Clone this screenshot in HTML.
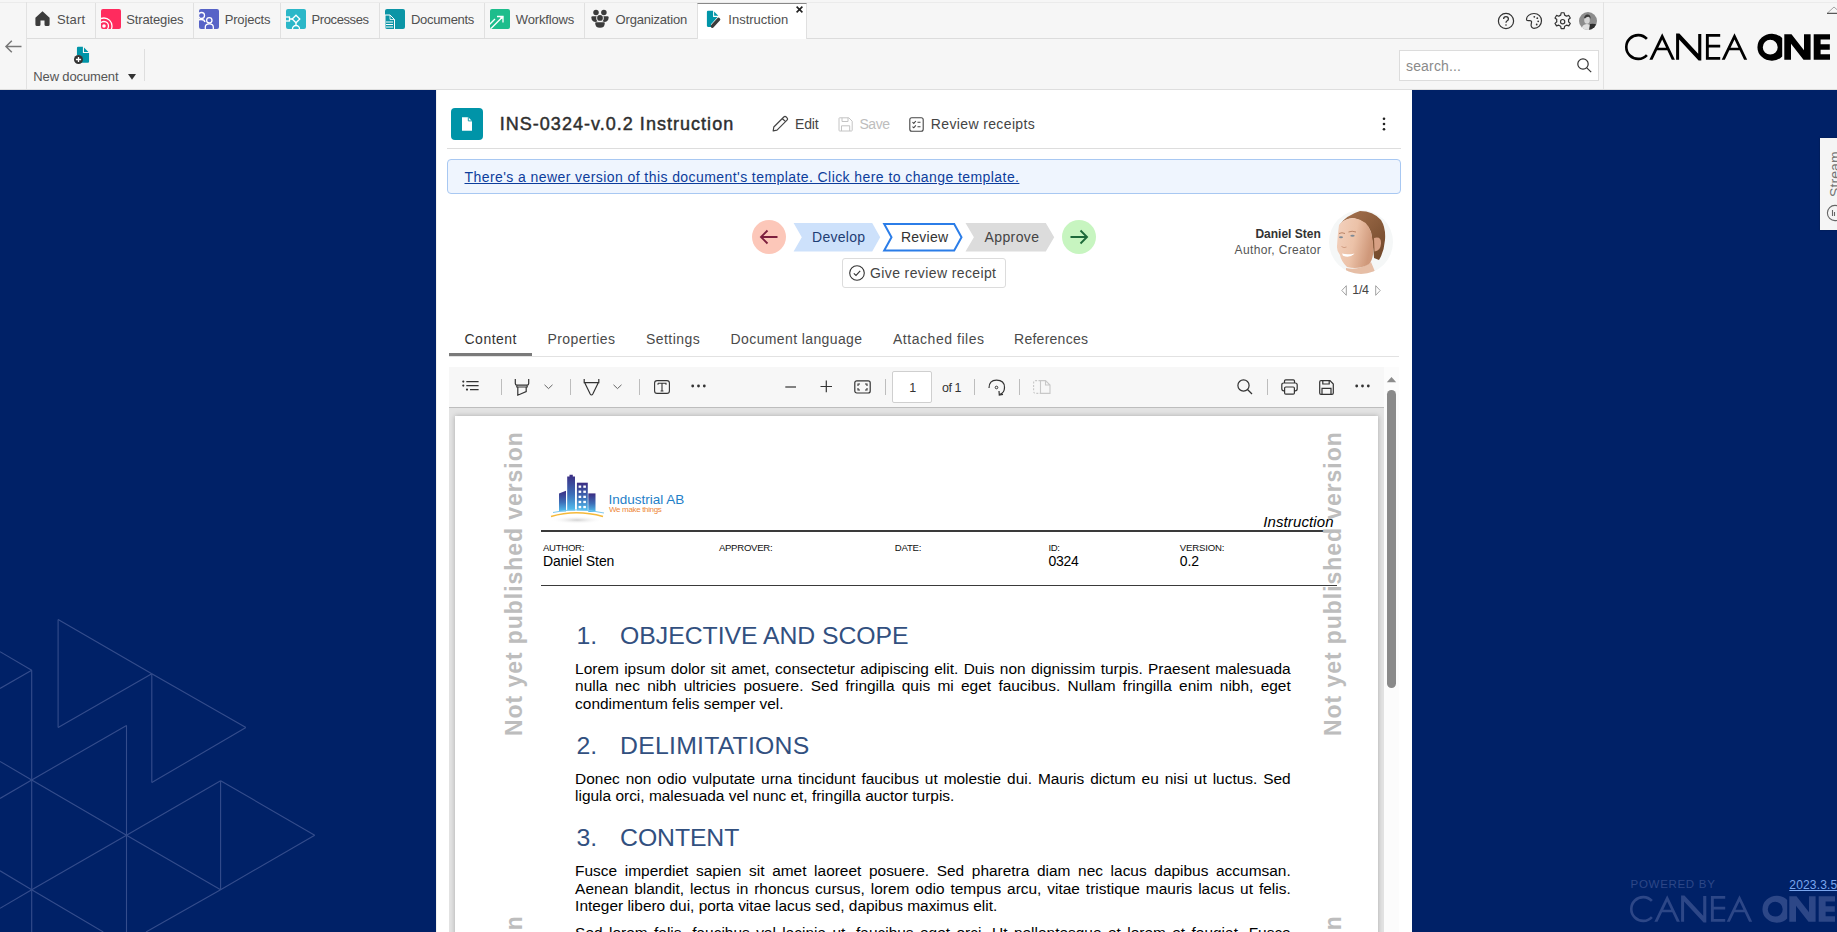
<!DOCTYPE html><html><head><meta charset="utf-8"><style>
*{box-sizing:border-box;margin:0;padding:0}
html,body{width:1837px;height:932px;overflow:hidden}
body{position:relative;background:#002167;font-family:"Liberation Sans",sans-serif;}
.a{position:absolute}
.t{position:absolute;white-space:nowrap;line-height:1}
svg{position:absolute;overflow:visible}
</style></head><body>
<svg class="a" style="left:0;top:0" width="1837" height="932"><line stroke="#344d8c" stroke-width="1.1"  x1="58.1" y1="619.6" x2="58.1" y2="727.6"/><line stroke="#344d8c" stroke-width="1.1"  x1="58.1" y1="619.6" x2="151.8" y2="673.8"/><line stroke="#344d8c" stroke-width="1.1"  x1="58.1" y1="727.6" x2="151.8" y2="673.8"/><line stroke="#344d8c" stroke-width="1.1"  x1="151.8" y1="673.8" x2="151.8" y2="782.5"/><line stroke="#344d8c" stroke-width="1.1"  x1="151.8" y1="673.8" x2="245.9" y2="727.6"/><line stroke="#344d8c" stroke-width="1.1"  x1="151.8" y1="782.5" x2="245.9" y2="727.6"/><line stroke="#344d8c" stroke-width="1.1"  x1="0" y1="651.7" x2="31.7" y2="670.2"/><line stroke="#344d8c" stroke-width="1.1"  x1="31.7" y1="670.2" x2="0" y2="688.4"/><line stroke="#344d8c" stroke-width="1.1"  x1="31.7" y1="670.2" x2="31.7" y2="940"/><line stroke="#344d8c" stroke-width="1.1"  x1="31.7" y1="780" x2="126.5" y2="725.4"/><line stroke="#344d8c" stroke-width="1.1"  x1="126.5" y1="725.4" x2="126.5" y2="940"/><line stroke="#344d8c" stroke-width="1.1"  x1="31.7" y1="780" x2="126.5" y2="835.2"/><line stroke="#344d8c" stroke-width="1.1"  x1="0" y1="761.4" x2="31.7" y2="780"/><line stroke="#344d8c" stroke-width="1.1"  x1="31.7" y1="780" x2="0" y2="798.5"/><line stroke="#344d8c" stroke-width="1.1"  x1="126.5" y1="835.2" x2="220.6" y2="780.7"/><line stroke="#344d8c" stroke-width="1.1"  x1="220.6" y1="780.7" x2="220.6" y2="889.7"/><line stroke="#344d8c" stroke-width="1.1"  x1="126.5" y1="835.2" x2="220.6" y2="889.7"/><line stroke="#344d8c" stroke-width="1.1"  x1="220.6" y1="780.7" x2="314.7" y2="835.2"/><line stroke="#344d8c" stroke-width="1.1"  x1="220.6" y1="889.7" x2="314.7" y2="835.2"/><line stroke="#344d8c" stroke-width="1.1"  x1="126.5" y1="835.2" x2="31.7" y2="889.7"/><line stroke="#344d8c" stroke-width="1.1"  x1="31.7" y1="889.7" x2="103.3" y2="932"/><line stroke="#344d8c" stroke-width="1.1"  x1="0" y1="870.8" x2="31.7" y2="889.7"/><line stroke="#344d8c" stroke-width="1.1"  x1="31.7" y1="889.7" x2="0" y2="908.3"/><line stroke="#344d8c" stroke-width="1.1"  x1="220.6" y1="889.7" x2="146" y2="932"/></svg>
<div class="a" style="left:0;top:0;width:1837px;height:90px;background:#f6f6f6;border-bottom:1px solid #dedede"></div>
<div class="a" style="left:0;top:2px;width:1837px;height:1px;background:#ebebeb"></div>
<div class="a" style="left:26px;top:2px;width:1px;height:87px;background:#e2e2e2"></div>
<div class="a" style="left:1603px;top:2px;width:1px;height:87px;background:#e2e2e2"></div>
<div class="a" style="left:27px;top:38px;width:1576px;height:1px;background:#dcdcdc"></div>
<div class="a" style="left:95px;top:3px;width:1px;height:35px;background:#e0e0e0"></div>
<div class="a" style="left:193px;top:3px;width:1px;height:35px;background:#e0e0e0"></div>
<div class="a" style="left:280px;top:3px;width:1px;height:35px;background:#e0e0e0"></div>
<div class="a" style="left:379px;top:3px;width:1px;height:35px;background:#e0e0e0"></div>
<div class="a" style="left:484px;top:3px;width:1px;height:35px;background:#e0e0e0"></div>
<div class="a" style="left:584px;top:3px;width:1px;height:35px;background:#e0e0e0"></div>
<div class="a" style="left:697px;top:3px;width:110px;height:36px;background:#fff;border-left:1px solid #e0e0e0;border-right:1px solid #e0e0e0;border-top:1px solid #888"></div>
<div class="t " style="left:57.00px;top:13.20px;font-size:13px;color:#505050;letter-spacing:0.137px;">Start</div>
<div class="t " style="left:126.30px;top:13.20px;font-size:13px;color:#505050;letter-spacing:-0.148px;">Strategies</div>
<div class="t " style="left:224.70px;top:13.20px;font-size:13px;color:#505050;letter-spacing:-0.166px;">Projects</div>
<div class="t " style="left:311.50px;top:13.20px;font-size:13px;color:#505050;letter-spacing:-0.399px;">Processes</div>
<div class="t " style="left:411.00px;top:13.20px;font-size:13px;color:#505050;letter-spacing:-0.306px;">Documents</div>
<div class="t " style="left:515.80px;top:13.20px;font-size:13px;color:#505050;letter-spacing:-0.152px;">Workflows</div>
<div class="t " style="left:615.60px;top:13.20px;font-size:13px;color:#505050;letter-spacing:-0.192px;">Organization</div>
<div class="t " style="left:728.30px;top:13.20px;font-size:13px;color:#505050;letter-spacing:0.003px;">Instruction</div>
<svg style="left:35px;top:11px" width="15" height="15" viewBox="0 0 15 15"><path d="M7.5 0.3 L14.6 6.8 V13.5 Q14.6 15 13.1 15 H11 Q9.5 15 9.5 13.5 V9.5 H5.5 V13.5 Q5.5 15 4 15 H1.9 Q0.4 15 0.4 13.5 V6.8 Z" fill="#3c3c3c"/></svg>
<svg style="left:101px;top:9px" width="20" height="20" viewBox="0 0 20 20"><defs><clipPath id="cs"><rect width="20" height="20" rx="2"/></clipPath></defs><rect width="20" height="20" rx="2" fill="#ff2b5e"/><g clip-path="url(#cs)" fill="none" stroke="#fff" stroke-width="1.3"><circle cx="3" cy="17" r="1.8" fill="#fff" stroke="none"/><circle cx="3" cy="17" r="4.5"/><circle cx="3" cy="17" r="8"/></g></svg>
<svg style="left:199px;top:9px" width="20" height="20" viewBox="0 0 20 20"><defs><clipPath id="cp"><rect width="20" height="20" rx="2"/></clipPath></defs><rect width="20" height="20" rx="2" fill="#5763c7"/><g clip-path="url(#cp)" fill="none" stroke="#fff" stroke-width="1.3"><circle cx="2.5" cy="6.5" r="3"/><path d="M-2 21 V14 Q-2 10.5 2 10.5 Q5.5 10.5 6 13"/><circle cx="10.3" cy="11.3" r="2.7"/><path d="M6.3 21 V18 Q6.3 14.8 10.3 14.8 Q14.3 14.8 14.3 18 V21"/></g></svg>
<svg style="left:286px;top:9px" width="20" height="20" viewBox="0 0 20 20"><defs><clipPath id="cq"><rect width="20" height="20" rx="2"/></clipPath></defs><rect width="20" height="20" rx="2" fill="#2bb7c8"/><g clip-path="url(#cq)" fill="none" stroke="#fff" stroke-width="1.3"><rect x="-1" y="8" width="4.5" height="4"/><path d="M3.5 10 H6"/><path d="M10 6.2 L13.8 10 L10 13.8 L6.2 10 Z"/><path d="M10 14 V16"/><circle cx="10" cy="20" r="3.5"/></g></svg>
<svg style="left:385px;top:9px" width="20" height="20" viewBox="0 0 20 20"><defs><clipPath id="cd"><rect width="20" height="20" rx="2"/></clipPath></defs><rect width="20" height="20" rx="2" fill="#0b95a6"/><g clip-path="url(#cd)"><path d="M0 6 H5 L9.5 10.5 V21 H0 Z" fill="none" stroke="#fff" stroke-width="1"/><path d="M5 6 V10.5 H9.5" fill="none" stroke="#fff" stroke-width="0.8"/><path d="M1 13 H8 M1 15.5 H8 M1 18 H8" stroke="#fff" stroke-width="1"/></g></svg>
<svg style="left:490px;top:9px" width="20" height="20" viewBox="0 0 20 20"><defs><clipPath id="cw"><rect width="20" height="20" rx="2"/></clipPath></defs><rect width="20" height="20" rx="2" fill="#1dbd8c"/><g clip-path="url(#cw)" fill="none" stroke="#fff" stroke-width="1.3"><path d="M7 7.5 H13 V13.5"/><path d="M13 7.5 L0 20.5"/><path d="M11 7.5 V9 H12.8" /><path d="M-1 16 L5 10"/></g></svg>
<svg style="left:588px;top:6px" width="24" height="26" viewBox="588 6 24 26" fill="#3b3b3b"><circle cx="596" cy="12.4" r="2.75"/><circle cx="603.9" cy="12.4" r="2.75"/><circle cx="600" cy="17.9" r="2.85"/><path d="M591.3 17.6 Q591.3 16.3 592.6 16.3 L596.6 16.3 Q596 17.2 596.3 19.2 Q596.8 20.6 597.6 21.3 Q595.2 22.6 593.5 21.6 Q591.3 20.5 591.3 17.6 Z"/><path d="M608.7 17.6 Q608.7 16.3 607.4 16.3 L603.4 16.3 Q604 17.2 603.7 19.2 Q603.2 20.6 602.4 21.3 Q604.8 22.6 606.5 21.6 Q608.7 20.5 608.7 17.6 Z"/><path d="M595.2 22.9 Q595.2 22.2 596 22.2 H604 Q604.8 22.2 604.8 22.9 Q604.8 27.8 600 27.8 Q595.2 27.8 595.2 22.9 Z"/></svg>
<svg style="left:703px;top:8px" width="24" height="22" viewBox="703 8 24 22"><path d="M706.9 11.9 Q706.9 10.8 708 10.8 H713.1 V17 H717.6 L711 24.3 V26.9 H708 Q706.9 26.9 706.9 25.8 Z" fill="#0095a8"/><path d="M714.1 11.5 V15.8 H718.3 Z" fill="#0095a8"/><path d="M712.4 26.2 L718.6 19.4" stroke="#3b3b3b" stroke-width="3.4" stroke-linecap="round"/></svg>
<svg style="left:796px;top:6px" width="7" height="7" viewBox="0 0 7 7"><path d="M0.6 0.6 L6.4 6.4 M6.4 0.6 L0.6 6.4" stroke="#222" stroke-width="1.6"/></svg>
<svg style="left:5px;top:40px" width="17" height="13" viewBox="0 0 17 13"><path d="M16.5 6.5 H1.2 M6.8 0.8 L1 6.5 L6.8 12.2" fill="none" stroke="#777" stroke-width="1.5"/></svg>
<svg style="left:70px;top:43px" width="24" height="24" viewBox="70 43 24 24"><path d="M76.95 48 Q76.95 46.86 78.1 46.86 H82.9 V53 H89.06 V61.7 Q89.06 62.8 87.9 62.8 H80 Q83.5 59.5 81 56 Q79 54.5 76.95 55 Z" fill="#0095a8"/><path d="M84 47.6 V51.9 H88.4 Z" fill="#0095a8"/><circle cx="78.5" cy="59.5" r="4.5" fill="#333"/><path d="M78.5 56.9 V62.1 M75.9 59.5 H81.1" stroke="#fff" stroke-width="1.3"/></svg>
<div class="t " style="left:33.30px;top:69.80px;font-size:13px;color:#555;letter-spacing:-0.137px;">New document</div>
<svg style="left:127.5px;top:74px" width="8" height="6" viewBox="0 0 8 6"><path d="M0 0 H8 L4 5.8 Z" fill="#333"/></svg>
<div class="a" style="left:144px;top:49px;width:1px;height:32px;background:#dedede"></div>
<svg style="left:1497px;top:12px" width="18" height="18" viewBox="0 0 18 18"><circle cx="9" cy="9" r="7.6" fill="none" stroke="#333" stroke-width="1.2"/><path d="M6.6 7 Q6.6 4.6 9 4.6 Q11.4 4.6 11.4 6.9 Q11.4 8.3 9.9 9 Q9 9.5 9 10.8" fill="none" stroke="#333" stroke-width="1.3"/><circle cx="9" cy="13" r="0.8" fill="#333"/></svg>
<svg style="left:1525px;top:12px" width="18" height="18" viewBox="0 0 18 18"><path d="M9 1.5 C4.5 1.5 1.5 4.5 1.5 7.2 C1.5 9.2 3.3 8.6 5 8.6 C7.2 8.6 6.6 10.5 6.2 12 C5.6 14.5 7.2 16.3 9 16.3 C13.3 16.3 16.5 12.8 16.5 8.8 C16.5 4.8 13.6 1.5 9 1.5 Z" fill="none" stroke="#333" stroke-width="1.2"/><circle cx="9.3" cy="4.8" r="0.9" fill="#333"/><circle cx="12.3" cy="6.2" r="0.9" fill="#333"/><circle cx="13.2" cy="9.3" r="0.9" fill="#333"/><circle cx="11.7" cy="12.5" r="0.9" fill="#333"/></svg>
<svg style="left:1551.5px;top:11px" width="21.3" height="21.3" viewBox="0 0 24 24"><path d="M10.3 2 h3.4 l0.5 2.6 a7.6 7.6 0 0 1 2.2 1.3 l2.5-0.9 1.7 2.9-2 1.7 a7.6 7.6 0 0 1 0 2.6 l2 1.7-1.7 2.9-2.5-0.9 a7.6 7.6 0 0 1-2.2 1.3 l-0.5 2.6 h-3.4 l-0.5-2.6 a7.6 7.6 0 0 1-2.2-1.3 l-2.5 0.9-1.7-2.9 2-1.7 a7.6 7.6 0 0 1 0-2.6 l-2-1.7 1.7-2.9 2.5 0.9 a7.6 7.6 0 0 1 2.2-1.3 Z" fill="none" stroke="#333" stroke-width="1.35" stroke-linejoin="round"/><circle cx="12" cy="12" r="2.4" fill="none" stroke="#333" stroke-width="1.35"/></svg>
<svg style="left:1579px;top:12px" width="18" height="18" viewBox="0 0 18 18"><defs><clipPath id="av1"><circle cx="9" cy="9" r="9"/></clipPath></defs><g clip-path="url(#av1)"><rect width="18" height="18" fill="#8d8d8d"/><path d="M2 18 Q3 12 8 12 Q12 12 13 18 Z" fill="#e0e0e0"/><ellipse cx="8" cy="8" rx="2.8" ry="3.8" fill="#d5d5d5"/><path d="M5 6 Q6 2 9 2.5 Q12 3 11.5 7 L10.5 5 Q8 4 6 6.5 Z" fill="#3a3a3a"/><path d="M11 12 L10 18 H18 V13 Q15 11 11 12 Z" fill="#2e2e2e"/></g></svg>
<div class="a" style="left:1399px;top:50px;width:200px;height:31px;background:#fff;border:1px solid #dcdcdc"></div>
<div class="t " style="left:1406.00px;top:59.05px;font-size:14px;color:#8a8a8a;letter-spacing:0.164px;">search...</div>
<svg style="left:1577px;top:58px" width="15" height="15" viewBox="0 0 15 15"><circle cx="6" cy="6" r="5.2" fill="none" stroke="#333" stroke-width="1.2"/><path d="M9.8 9.8 L14.2 14.2" stroke="#333" stroke-width="1.2"/></svg>
<svg style="left:1820px;top:0px" width="17" height="16" viewBox="1820 0 17 16"><path d="M1827.3 13.2 L1834 7 L1841 13.2" fill="none" stroke="#9a9a9a" stroke-width="0.9"/><path d="M1827 13.3 H1837" stroke="#333" stroke-width="1"/></svg>
<svg style="left:0;top:0;color:#000" width="1837" height="90" viewBox="0 0 1837 90" fill="currentColor"><path d="M1646.9 38.9 A11.9 11.9 0 1 0 1646.9 55.1" fill="none" stroke="currentColor" stroke-width="2.6"/><path d="M1649.4 59.85 L1662.2 33.2 L1674.9 59.85 H1671.8 L1662.2 39.6 L1652.5 59.85 Z M1655.4 47.8 H1669 V50.3 H1655.4 Z"/><path d="M1676.1 33.4 H1679.4 L1698.2 53.8 V33.9 H1701.3 V60.6 H1698.6 L1679.1 39.6 V59.85 H1676.1 Z"/><path d="M1705.9 33.9 H1720.2 V36.8 H1708.8 V44.8 H1720.2 V47.4 H1708.8 V56.9 H1720.2 V59.85 H1705.9 Z"/><path d="M1721.7 59.85 L1734.5 33.2 L1747.2 59.85 H1744.1 L1734.5 39.6 L1724.8 59.85 Z M1727.7 47.8 H1741.3 V50.3 H1727.7 Z"/><path fill-rule="evenodd" d="M1782.2 38 A14.3 13.5 0 1 0 1782.2 56.4 Z M1777.7 47.2 A7.45 7.35 0 1 0 1762.8 47.2 A7.45 7.35 0 1 0 1777.7 47.2 Z"/><path d="M1784.3 34.2 H1791.5 L1804 50.3 V34.2 H1810.6 V59.7 H1803.5 L1791 43.8 V59.7 H1784.3 Z"/><path d="M1813.7 34.2 H1830 V39.6 H1820.6 V44.3 H1829.8 V49.8 H1820.6 V54.3 H1830 V59.7 H1813.7 Z"/></svg>
<div class="t " style="left:1630.60px;top:879.27px;font-size:11.5px;color:#2d4787;letter-spacing:0.694px;">POWERED BY</div>
<svg style="left:0;top:0;color:#2d4787" width="1837" height="932" viewBox="0 0 1837 932" fill="currentColor"><g transform="translate(5 862)"><path d="M1646.9 38.9 A11.9 11.9 0 1 0 1646.9 55.1" fill="none" stroke="currentColor" stroke-width="2.6"/><path d="M1649.4 59.85 L1662.2 33.2 L1674.9 59.85 H1671.8 L1662.2 39.6 L1652.5 59.85 Z M1655.4 47.8 H1669 V50.3 H1655.4 Z"/><path d="M1676.1 33.4 H1679.4 L1698.2 53.8 V33.9 H1701.3 V60.6 H1698.6 L1679.1 39.6 V59.85 H1676.1 Z"/><path d="M1705.9 33.9 H1720.2 V36.8 H1708.8 V44.8 H1720.2 V47.4 H1708.8 V56.9 H1720.2 V59.85 H1705.9 Z"/><path d="M1721.7 59.85 L1734.5 33.2 L1747.2 59.85 H1744.1 L1734.5 39.6 L1724.8 59.85 Z M1727.7 47.8 H1741.3 V50.3 H1727.7 Z"/><path fill-rule="evenodd" d="M1782.2 38 A14.3 13.5 0 1 0 1782.2 56.4 Z M1777.7 47.2 A7.45 7.35 0 1 0 1762.8 47.2 A7.45 7.35 0 1 0 1777.7 47.2 Z"/><path d="M1784.3 34.2 H1791.5 L1804 50.3 V34.2 H1810.6 V59.7 H1803.5 L1791 43.8 V59.7 H1784.3 Z"/><path d="M1813.7 34.2 H1830 V39.6 H1820.6 V44.3 H1829.8 V49.8 H1820.6 V54.3 H1830 V59.7 H1813.7 Z"/></g></svg>
<div class="t " style="left:1789.30px;top:879.24px;font-size:12px;color:#7aa6ee;letter-spacing:0.184px;text-decoration:underline;">2023.3.5</div>
<div class="a" style="left:436px;top:90px;width:976px;height:842px;background:#fff;border-left:1px solid #f1f1ee"></div>
<div class="a" style="left:1820px;top:138px;width:20px;height:92px;background:#f5f5f5;box-shadow:0 0 1.5px rgba(0,0,0,0.35)"></div>
<div class="t" style="left:1827.7px;top:197px;font-size:14px;color:#777;letter-spacing:0.1px;transform-origin:0 0;transform:rotate(-90deg)">Stream</div>
<svg style="left:1826px;top:204px" width="18" height="18" viewBox="0 0 18 18"><circle cx="9" cy="9" r="7.6" fill="none" stroke="#666" stroke-width="1.1"/><path d="M6.5 6 V12 M8.5 8 V12" stroke="#666" stroke-width="1.1"/></svg>
<svg style="left:451px;top:108px" width="32" height="32" viewBox="0 0 32 32"><rect width="32" height="32" rx="4" fill="#0094a8"/><path d="M11 9.2 H17.3 L21 12.9 V22.8 H11 Z" fill="#fff"/><path d="M17.3 9.2 V12.9 H21" fill="none" stroke="#0094a8" stroke-width="0.9"/></svg>
<div class="t " style="left:499.70px;top:114.56px;font-size:18px;color:#2e2e2e;letter-spacing:1.029px;-webkit-text-stroke:0.45px #2e2e2e;">INS-0324-v.0.2 Instruction</div>
<svg style="left:772px;top:115px" width="17" height="17" viewBox="0 0 17 17"><path d="M1.2 15.8 L1.8 12 L11.8 2 Q13 0.8 14.2 2 L15 2.8 Q16.2 4 15 5.2 L5 15.2 Z M10.3 3.5 L13.5 6.7" fill="none" stroke="#444" stroke-width="1.2" stroke-linejoin="round"/></svg>
<div class="t " style="left:795.00px;top:117.15px;font-size:14px;color:#444;letter-spacing:-0.141px;">Edit</div>
<svg style="left:837.5px;top:116.8px" width="15" height="15" viewBox="0 0 15 15"><path d="M1 1.5 Q1 0.8 1.7 0.8 H10.8 L14.2 4.2 V13.3 Q14.2 14 13.5 14 H1.7 Q1 14 1 13.3 Z" fill="none" stroke="#c4c4c4" stroke-width="1"/><path d="M4 0.8 V4.5 H10 V0.8 M3.5 14 V8.8 H11.7 V14" fill="none" stroke="#c4c4c4" stroke-width="1"/></svg>
<div class="t " style="left:859.50px;top:117.15px;font-size:14px;color:#bdbdbd;letter-spacing:-0.470px;">Save</div>
<svg style="left:908.8px;top:116.5px" width="15" height="15" viewBox="0 0 15 15"><rect x="0.8" y="0.8" width="13.4" height="13.4" rx="2" fill="none" stroke="#444" stroke-width="1.1"/><path d="M3.5 5.2 L4.8 6.4 L6.8 4 M3.5 9.6 L4.8 10.8 L6.8 8.4 M8.5 5.3 H11.5 M8.5 9.7 H11.5" fill="none" stroke="#444" stroke-width="1.1"/></svg>
<div class="t " style="left:930.80px;top:117.15px;font-size:14px;color:#444;letter-spacing:0.370px;">Review receipts</div>
<svg style="left:1382px;top:117px" width="4" height="14" viewBox="0 0 4 14" fill="#222"><circle cx="2" cy="1.8" r="1.3"/><circle cx="2" cy="7" r="1.3"/><circle cx="2" cy="12.2" r="1.3"/></svg>
<div class="a" style="left:447px;top:148px;width:954px;height:1px;background:#dddddd"></div>
<div class="a" style="left:447px;top:159px;width:954px;height:35px;background:#eff5fe;border:1px solid #a8c8f2;border-radius:4px"></div>
<div class="t " style="left:464.50px;top:169.95px;font-size:14px;color:#0d3d9c;letter-spacing:0.424px;text-decoration:underline;text-underline-offset:1px;">There's a newer version of this document's template. Click here to change template.</div>
<svg style="left:752px;top:220px" width="34" height="34" viewBox="0 0 34 34"><circle cx="17" cy="17" r="17" fill="#fcc7b9"/><path d="M25.5 17 H9 M15.5 10.5 L9 17 L15.5 23.5" fill="none" stroke="#7c1f3d" stroke-width="1.9"/></svg>
<svg style="left:793px;top:223px" width="262" height="29" viewBox="0 0 262 29"><path d="M0.6 0 H79.2 L87.2 14.3 L79.2 28.6 H0.6 L8.8 14.3 Z" fill="#cde1fb"/><path d="M91.2 1 H161.2 L168.5 14.3 L161.2 27.6 H91.2 L98.5 14.3 Z" fill="#fff" stroke="#2b7de8" stroke-width="2"/><path d="M172.5 0 H252.8 L261.2 14.3 L252.8 28.6 H172.5 L180.9 14.3 Z" fill="#dcdcdc"/></svg>
<div class="t " style="left:812.00px;top:230.35px;font-size:14px;color:#1e3d74;letter-spacing:0.272px;">Develop</div>
<div class="t " style="left:901.00px;top:230.35px;font-size:14px;color:#333;letter-spacing:0.219px;">Review</div>
<div class="t " style="left:984.50px;top:230.35px;font-size:14px;color:#444;letter-spacing:0.393px;">Approve</div>
<svg style="left:1062px;top:220px" width="34" height="34" viewBox="0 0 34 34"><circle cx="17" cy="17" r="17" fill="#c7f5c0"/><path d="M8.5 17 H25 M18.5 10.5 L25 17 L18.5 23.5" fill="none" stroke="#1d6a3a" stroke-width="1.9"/></svg>
<div class="a" style="left:842px;top:258px;width:164px;height:30px;background:#fff;border:1px solid #dcdcdc;border-radius:3px"></div>
<svg style="left:849px;top:265px" width="16" height="16" viewBox="0 0 16 16"><circle cx="8" cy="8" r="7.3" fill="none" stroke="#333" stroke-width="1.1"/><path d="M4.8 8.3 L7 10.4 L11.2 5.8" fill="none" stroke="#333" stroke-width="1.1"/></svg>
<div class="t " style="left:870.00px;top:266.15px;font-size:14px;color:#444;letter-spacing:0.387px;">Give review receipt</div>
<div class="t " style="left:1255.40px;top:227.64px;font-size:12px;color:#333;font-weight:700;letter-spacing:0.005px;">Daniel Sten</div>
<div class="t " style="left:1234.60px;top:243.64px;font-size:12px;color:#555;letter-spacing:0.345px;">Author, Creator</div>
<svg style="left:1329px;top:210px" width="64" height="64" viewBox="0 0 64 64"><defs><clipPath id="avc"><circle cx="32" cy="32" r="32"/></clipPath><linearGradient id="skin" x1="0" y1="0" x2="1" y2="0.3"><stop offset="0" stop-color="#f3d2bf"/><stop offset="0.55" stop-color="#ecc2a8"/><stop offset="1" stop-color="#cf987a"/></linearGradient><linearGradient id="hair" x1="0" y1="0" x2="1" y2="1"><stop offset="0" stop-color="#a87450"/><stop offset="1" stop-color="#6f4629"/></linearGradient></defs>
<g clip-path="url(#avc)"><rect width="64" height="64" fill="#f5f7f7"/>
<path d="M17 58 Q30 61 42 52 L47 64 H17 Z" fill="#e6bea6"/>
<path d="M10 15 Q18 5 31 1 Q44 1 52 10 Q57 18 56 30 Q55 42 50 50 L45 48 Q44 34 42 22 Q38 11 24 8 Q15 9 10 15 Z" fill="url(#hair)"/>
<path d="M10 15 Q16 8 25 8 Q38 10 42 22 Q44.5 32 44.5 40 Q44 50 40 54 Q30 60 18 57 Q12 51 11 45 Q7.5 41 8 36 Q8.5 25 10 15 Z" fill="url(#skin)"/>
<path d="M45 28 Q52.5 26 52 33.5 Q51.5 41 45.5 41.5 Z" fill="#d7a084"/>
<ellipse cx="12" cy="27.2" rx="2" ry="1" fill="#7d8a96"/><ellipse cx="23.5" cy="25.7" rx="2.2" ry="1" fill="#7d8a96"/>
<path d="M10 23.5 Q13 22 16 23.5 M19.5 22 Q23 20.5 27 22" fill="none" stroke="#b98466" stroke-width="1"/>
<path d="M13 43.6 Q19 45 25.5 43.4 Q21 48.5 14 45.8 Z" fill="#fff"/>
<path d="M12.5 36.5 Q15 38.5 17.5 37" fill="none" stroke="#c99377" stroke-width="0.8"/>
</g></svg>
<svg style="left:1341px;top:285px" width="6" height="11" viewBox="0 0 6 11"><path d="M5.3 0.7 L0.8 5.5 L5.3 10.3 Z" fill="none" stroke="#999" stroke-width="0.9"/></svg>
<div class="t " style="left:1352.30px;top:284.42px;font-size:12.5px;color:#444;letter-spacing:-0.338px;">1/4</div>
<svg style="left:1375px;top:285px" width="6" height="11" viewBox="0 0 6 11"><path d="M0.7 0.7 L5.2 5.5 L0.7 10.3 Z" fill="none" stroke="#999" stroke-width="0.9"/></svg>
<div class="t " style="left:464.50px;top:332.15px;font-size:14px;color:#333;letter-spacing:0.494px;">Content</div>
<div class="t " style="left:547.40px;top:332.15px;font-size:14px;color:#4a4a4a;letter-spacing:0.421px;">Properties</div>
<div class="t " style="left:646.00px;top:332.15px;font-size:14px;color:#4a4a4a;letter-spacing:0.445px;">Settings</div>
<div class="t " style="left:730.60px;top:332.15px;font-size:14px;color:#4a4a4a;letter-spacing:0.381px;">Document language</div>
<div class="t " style="left:893.00px;top:332.15px;font-size:14px;color:#4a4a4a;letter-spacing:0.535px;">Attached files</div>
<div class="t " style="left:1014.00px;top:332.15px;font-size:14px;color:#4a4a4a;letter-spacing:0.267px;">References</div>
<div class="a" style="left:449px;top:356px;width:950px;height:1px;background:#e2e2e2"></div>
<div class="a" style="left:449px;top:353px;width:83px;height:3px;background:#7a7a7a"></div>
<div class="a" style="left:449px;top:367px;width:935px;height:41px;background:#f7f7f7;border-bottom:1px solid #bdbdbd"></div>
<div class="a" style="left:1384px;top:367px;width:15px;height:565px;background:#fcfcfc"></div>
<svg style="left:1386px;top:376px" width="11" height="7" viewBox="0 0 11 7"><path d="M0.8 6.3 L5.5 1 L10.2 6.3 Z" fill="#8c8c8c"/></svg>
<div class="a" style="left:1387px;top:390px;width:9px;height:298px;background:#8a8a8a;border-radius:5px"></div>
<div class="a" style="left:449px;top:408px;width:935px;height:524px;background:#e3e3e3"></div>
<div class="a" style="left:455px;top:416px;width:923px;height:520px;background:#fff;box-shadow:0 0 5px rgba(0,0,0,0.25)"></div>
<div class="a" style="left:501px;top:379px;width:1px;height:16px;background:#bdbdbd"></div>
<div class="a" style="left:570px;top:379px;width:1px;height:16px;background:#bdbdbd"></div>
<div class="a" style="left:639px;top:379px;width:1px;height:16px;background:#bdbdbd"></div>
<div class="a" style="left:885px;top:379px;width:1px;height:16px;background:#bdbdbd"></div>
<div class="a" style="left:974px;top:379px;width:1px;height:16px;background:#bdbdbd"></div>
<div class="a" style="left:1019px;top:379px;width:1px;height:16px;background:#bdbdbd"></div>
<div class="a" style="left:1267px;top:379px;width:1px;height:16px;background:#bdbdbd"></div>
<svg style="left:462px;top:380px" width="18" height="12" viewBox="0 0 18 12"><circle cx="1.3" cy="1.6" r="1.1" fill="#333"/><circle cx="1.3" cy="5.6" r="1.1" fill="#333"/><circle cx="5" cy="9.6" r="1.1" fill="#333"/><path d="M4.3 1.6 H16.6 M4.3 5.6 H16.6 M8 9.6 H16.6" stroke="#333" stroke-width="1.1"/></svg>
<svg style="left:514px;top:379px" width="16" height="17" viewBox="0 0 16 17"><path d="M1.3 0 V4.5 Q1.3 6.2 3 6.2 H13 Q14.7 6.2 14.7 4.5 V0 M2.8 6.2 V8 H13.2 V6.2 M3.8 8 V16.2 L12.2 12.6 V8" fill="none" stroke="#333" stroke-width="1.2"/></svg>
<svg style="left:544px;top:384px" width="9" height="6" viewBox="0 0 9 6"><path d="M0.5 0.8 L4.5 4.6 L8.5 0.8" fill="none" stroke="#555" stroke-width="0.9"/></svg>
<svg style="left:583px;top:379px" width="17" height="17" viewBox="0 0 17 17"><path d="M1.2 0 V3.6 H15.8 V0 M1.6 3.6 L7.2 15 Q8.5 17 9.8 15 L15.4 3.6" fill="none" stroke="#333" stroke-width="1.2"/></svg>
<svg style="left:613px;top:384px" width="9" height="6" viewBox="0 0 9 6"><path d="M0.5 0.8 L4.5 4.6 L8.5 0.8" fill="none" stroke="#555" stroke-width="0.9"/></svg>
<svg style="left:654px;top:380px" width="16" height="14" viewBox="0 0 16 14"><rect x="0.6" y="0.6" width="14.8" height="12.8" rx="2.5" fill="none" stroke="#333" stroke-width="1.1"/><path d="M4 3.2 H12 V4.8 M4 3.2 V4.8 M8 3.2 V11 M6.6 11 H9.4" fill="none" stroke="#333" stroke-width="1.1"/></svg>
<svg style="left:690.5px;top:384px" width="15" height="4" viewBox="0 0 15 4" fill="#333"><circle cx="1.7" cy="2" r="1.4"/><circle cx="7.5" cy="2" r="1.4"/><circle cx="13.3" cy="2" r="1.4"/></svg>
<svg style="left:1354.5px;top:384px" width="15" height="4" viewBox="0 0 15 4" fill="#333"><circle cx="1.7" cy="2" r="1.4"/><circle cx="7.5" cy="2" r="1.4"/><circle cx="13.3" cy="2" r="1.4"/></svg>
<svg style="left:785px;top:381px" width="12" height="12" viewBox="0 0 12 12"><path d="M0.3 6 H11" stroke="#333" stroke-width="1.2"/></svg>
<svg style="left:820px;top:380px" width="13" height="13" viewBox="0 0 13 13"><path d="M0.5 6.5 H12 M6.3 0.5 V12.3" stroke="#333" stroke-width="1.2"/></svg>
<svg style="left:854px;top:380px" width="17" height="14" viewBox="0 0 17 14"><rect x="0.8" y="0.8" width="15.4" height="12.2" rx="2" fill="none" stroke="#333" stroke-width="1.2"/><path d="M4 6 V4 H6 M11 4 H13 V6 M13 8 V10 H11 M6 10 H4 V8" fill="none" stroke="#333" stroke-width="1.1"/></svg>
<div class="a" style="left:892px;top:371px;width:40px;height:32px;background:#fff;border:1px solid #cfcfcf;border-radius:2px"></div>
<div class="t " style="left:909.20px;top:381.72px;font-size:12.5px;color:#333;">1</div>
<div class="t " style="left:942.00px;top:381.72px;font-size:12.5px;color:#333;letter-spacing:-0.450px;">of 1</div>
<svg style="left:988px;top:379px" width="18" height="17" viewBox="0 0 18 17"><path d="M1 9 Q1 1.2 8.5 1.2 Q16.5 1.2 16.5 8.5 Q16.5 14 11.5 15.6" fill="none" stroke="#333" stroke-width="1.2"/><path d="M11 12 L11.3 16 L15 15.3" fill="none" stroke="#333" stroke-width="1.2"/><circle cx="8.5" cy="8.5" r="1.3" fill="none" stroke="#333" stroke-width="1"/></svg>
<svg style="left:1033px;top:380px" width="18" height="14" viewBox="0 0 18 14"><path d="M7.5 0.6 H3 Q0.6 0.6 0.6 3 V11 Q0.6 13.4 3 13.4 H7.5" fill="none" stroke="#c8c8c8" stroke-width="1.1" stroke-dasharray="2 1.4"/><path d="M7.5 0.6 H12.5 L17 5 V13.4 H7.5 Z M12.5 0.6 V5 H17" fill="none" stroke="#c8c8c8" stroke-width="1.1"/></svg>
<svg style="left:1237px;top:379px" width="16" height="16" viewBox="0 0 16 16"><circle cx="6.5" cy="6.5" r="5.6" fill="none" stroke="#333" stroke-width="1.2"/><path d="M10.5 10.5 L15 15" stroke="#333" stroke-width="1.2"/></svg>
<svg style="left:1281px;top:379px" width="17" height="16" viewBox="0 0 17 16"><path d="M3.5 4 V2 Q3.5 0.8 4.7 0.8 H12.3 Q13.5 0.8 13.5 2 V4 M3.5 11.8 H2.8 Q0.8 11.8 0.8 9.8 V6 Q0.8 4 2.8 4 H14.2 Q16.2 4 16.2 6 V9.8 Q16.2 11.8 14.2 11.8 H13.5" fill="none" stroke="#333" stroke-width="1.2"/><rect x="3.6" y="8" width="9.8" height="7.2" rx="1.2" fill="none" stroke="#333" stroke-width="1.2"/></svg>
<svg style="left:1319px;top:380px" width="15" height="15" viewBox="0 0 15 15"><path d="M0.7 2 Q0.7 0.7 2 0.7 H11 L14.3 4 V13 Q14.3 14.3 13 14.3 H2 Q0.7 14.3 0.7 13 Z" fill="none" stroke="#333" stroke-width="1.2"/><path d="M3.8 0.7 V4 H10.2 V0.7 M3 14.3 V8.3 H12 V14.3" fill="none" stroke="#333" stroke-width="1.2"/></svg>
<svg style="left:545px;top:470px" width="64" height="56" viewBox="545 470 64 56">
<defs><linearGradient id="bg1" x1="0" y1="0" x2="0" y2="1"><stop offset="0" stop-color="#3b2c82"/><stop offset="0.55" stop-color="#3d6fb8"/><stop offset="1" stop-color="#52c0f0"/></linearGradient>
<radialGradient id="sh" cx="0.5" cy="0.5" r="0.5"><stop offset="0" stop-color="#d0d0d0"/><stop offset="1" stop-color="#fff" stop-opacity="0"/></radialGradient></defs>
<ellipse cx="577" cy="520" rx="26" ry="4" fill="url(#sh)"/>
<path d="M559 493.4 L566 490.8 V511.5 H559 Z" fill="url(#bg1)"/>
<path d="M567.2 476.6 H569.5 V474.7 H572.8 V476.6 H575 V510.5 H567.2 Z" fill="url(#bg1)"/>
<path d="M576.9 482.7 H587.8 V510.5 H576.9 Z" fill="url(#bg1)"/>
<path d="M588.3 493.4 H595.5 V512 H588.3 Z" fill="url(#bg1)"/>
<g fill="#fff"><rect x="578.6" y="485.5" width="2.6" height="2.3"/><rect x="583.3" y="485.5" width="2.6" height="2.3"/><rect x="578.6" y="490.6" width="2.6" height="2.3"/><rect x="583.3" y="490.6" width="2.6" height="2.3"/><rect x="578.6" y="495.7" width="2.6" height="2.3"/><rect x="583.3" y="495.7" width="2.6" height="2.3"/><rect x="578.6" y="500.8" width="2.6" height="2.3"/><rect x="583.3" y="500.8" width="2.6" height="2.3"/><rect x="578.6" y="505.9" width="2.6" height="2.3"/><rect x="583.3" y="505.9" width="2.6" height="2.3"/></g>
<path d="M553 512.5 Q577 507 604 513" fill="none" stroke="#7cc8f0" stroke-width="1"/>
<path d="M551 516.5 Q576 509 603 516.5" fill="none" stroke="#f5b93a" stroke-width="1.6"/>
</svg>
<div class="t " style="left:608.40px;top:492.87px;font-size:13.5px;color:#1f80c8;letter-spacing:0.005px;">Industrial AB</div>
<div class="t " style="left:609.00px;top:505.63px;font-size:8px;color:#ee8636;letter-spacing:-0.339px;">We make things</div>
<div class="t " style="left:1263.20px;top:513.90px;font-size:15px;color:#000;font-style:italic;letter-spacing:0.120px;z-index:2;">Instruction</div>
<div class="a" style="left:540.5px;top:530.4px;width:784px;height:1.4px;background:#3a3a3a"></div>
<div class="a" style="left:540.5px;top:584.8px;width:796px;height:1.4px;background:#3a3a3a;z-index:2"></div>
<div class="t " style="left:542.90px;top:543.27px;font-size:9.6px;color:#111;letter-spacing:-0.279px;">AUTHOR:</div>
<div class="t " style="left:542.90px;top:554.05px;font-size:14px;color:#000;letter-spacing:-0.088px;">Daniel Sten</div>
<div class="t " style="left:718.90px;top:543.27px;font-size:9.6px;color:#111;letter-spacing:-0.285px;">APPROVER:</div>
<div class="t " style="left:894.70px;top:543.27px;font-size:9.6px;color:#111;letter-spacing:-0.185px;">DATE:</div>
<div class="t " style="left:1048.50px;top:543.27px;font-size:9.6px;color:#111;letter-spacing:-0.380px;">ID:</div>
<div class="t " style="left:1048.50px;top:554.05px;font-size:14px;color:#000;letter-spacing:-0.248px;">0324</div>
<div class="t " style="left:1179.80px;top:543.27px;font-size:9.6px;color:#111;letter-spacing:-0.192px;">VERSION:</div>
<div class="t " style="left:1179.80px;top:554.05px;font-size:14px;color:#000;letter-spacing:-0.131px;">0.2</div>
<div class="t " style="left:576.50px;top:623.61px;font-size:24.8px;color:#32507f;">1.</div>
<div class="t " style="left:620.10px;top:623.61px;font-size:24.8px;color:#32507f;letter-spacing:-0.046px;">OBJECTIVE AND SCOPE</div>
<div class="t " style="left:576.50px;top:733.71px;font-size:24.8px;color:#32507f;">2.</div>
<div class="t " style="left:620.10px;top:733.71px;font-size:24.8px;color:#32507f;letter-spacing:0.229px;">DELIMITATIONS</div>
<div class="t " style="left:576.50px;top:826.11px;font-size:24.8px;color:#32507f;">3.</div>
<div class="t " style="left:620.10px;top:826.11px;font-size:24.8px;color:#32507f;letter-spacing:-0.107px;">CONTENT</div>
<div class="t" style="left:575.1px;top:660.92px;width:715.6px;font-size:15.45px;color:#000;text-align:justify;text-align-last:justify;">Lorem ipsum dolor sit amet, consectetur adipiscing elit. Duis non dignissim turpis. Praesent malesuada</div>
<div class="t" style="left:575.1px;top:678.27px;width:715.6px;font-size:15.45px;color:#000;text-align:justify;text-align-last:justify;">nulla nec nibh ultricies posuere. Sed fringilla quis mi eget faucibus. Nullam fringilla enim nibh, eget</div>
<div class="t" style="left:575.1px;top:695.62px;width:715.6px;font-size:15.45px;color:#000;text-align:left;">condimentum felis semper vel.</div>
<div class="t" style="left:575.1px;top:771.02px;width:715.6px;font-size:15.45px;color:#000;text-align:justify;text-align-last:justify;">Donec non odio vulputate urna tincidunt faucibus ut molestie dui. Mauris dictum eu nisi ut luctus. Sed</div>
<div class="t" style="left:575.1px;top:788.37px;width:715.6px;font-size:15.45px;color:#000;text-align:left;">ligula orci, malesuada vel nunc et, fringilla auctor turpis.</div>
<div class="t" style="left:575.1px;top:863.42px;width:715.6px;font-size:15.45px;color:#000;text-align:justify;text-align-last:justify;">Fusce imperdiet sapien sit amet laoreet posuere. Sed pharetra diam nec lacus dapibus accumsan.</div>
<div class="t" style="left:575.1px;top:880.77px;width:715.6px;font-size:15.45px;color:#000;text-align:justify;text-align-last:justify;">Aenean blandit, lectus in rhoncus cursus, lorem odio tempus arcu, vitae tristique mauris lacus ut felis.</div>
<div class="t" style="left:575.1px;top:898.12px;width:715.6px;font-size:15.45px;color:#000;text-align:left;">Integer libero dui, porta vitae lacus sed, dapibus maximus elit.</div>
<div class="t" style="left:575.1px;top:925.42px;width:715.6px;font-size:15.45px;color:#000;text-align:justify;text-align-last:justify;">Sed lorem felis, faucibus vel lacinia ut, faucibus eget orci. Ut pellentesque et lorem et feugiat. Fusce</div>
<div class="t" style="left:503.3px;top:736px;font-size:23px;font-weight:700;color:#bdbdbd;letter-spacing:0.94px;transform-origin:0 0;transform:rotate(-90deg)">Not yet published version</div>
<div class="t" style="left:503.3px;top:1219.5px;font-size:23px;font-weight:700;color:#bdbdbd;letter-spacing:0.94px;transform-origin:0 0;transform:rotate(-90deg)">Not yet published version</div>
<div class="t" style="left:1321.8px;top:736px;font-size:23px;font-weight:700;color:#bdbdbd;letter-spacing:0.94px;transform-origin:0 0;transform:rotate(-90deg)">Not yet published version</div>
<div class="t" style="left:1321.8px;top:1219.5px;font-size:23px;font-weight:700;color:#bdbdbd;letter-spacing:0.94px;transform-origin:0 0;transform:rotate(-90deg)">Not yet published version</div>
</body></html>
